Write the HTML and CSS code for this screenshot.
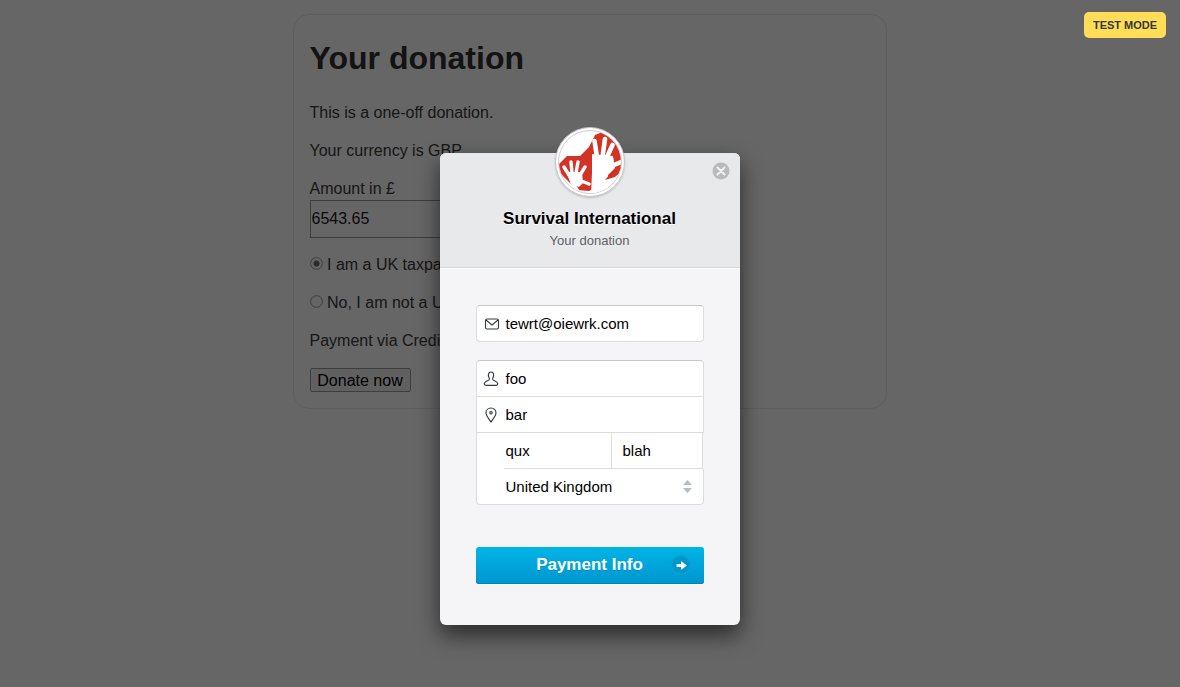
FILE: index.html
```html
<!DOCTYPE html>
<html lang="en">
<head>
<meta charset="utf-8">
<title>Your donation</title>
<link rel="stylesheet" href="styles.css">
</head>
<body>
<main class="page">
  <h1 class="title">Your donation</h1>
  <p class="line">This is a one-off donation.</p>
  <p class="line">Your currency is GBP.</p>
  <label class="amount-label">Amount in £</label>
  <input class="amount" type="text" value="6543.65">
  <p class="line radio-line"><span class="radio on"></span>I am a UK taxpayer.</p>
  <p class="line radio-line"><span class="radio"></span>No, I am not a UK taxpayer.</p>
  <p class="line">Payment via Credit Card.</p>
  <button class="donate">Donate now</button>
</main>

<div class="overlay">
  <section class="modal">
    <div class="logo">
      <svg width="70" height="70" viewBox="0 0 70 70">
        <circle cx="35" cy="35" r="34.5" fill="#fff" stroke="#c4c4c4" stroke-width="1"/>
        <circle cx="35" cy="35" r="31.5" fill="#fff" stroke="#cfcfcf" stroke-width="1"/>
        <clipPath id="inner"><circle cx="35" cy="35" r="31"/></clipPath>
        <g clip-path="url(#inner)">
          <path class="red" d="M3 38 L12 29 L25 29 L34 20 L40 8 L52 3 L64 12 L70 32 L69 40 L56 50 L50 53 L42 60 L34 64 L22 63 L6 47 Z"/>
          <path class="white" d="M37 27 L58 29 L60 41 L53 48 L53 68 L36 68 L37 45 Z"/>
          <path class="big" d="M42 30 L39.5 14 M47.5 30 L50 12 M52 30 L57.5 18 M54 40 L66 35"/>
          <path class="red" d="M50 53 L56 46 L68 39 L69 42 L60 50 Z"/>
          <path class="white" d="M11 45 L27 45 L28 56 L24 60 L16 57 Z"/>
          <path class="small" d="M14 48 L9 40 M17 46 L16 35 M21 46 L23 35 M25 48 L30 40 M24 53 L34 57 M17 55 L24 66"/>
        </g>
      </svg>
    </div>
    <button class="close" aria-label="Close">
      <svg width="18" height="18" viewBox="0 0 18 18">
        <circle cx="9" cy="9" r="8.5" fill="#b9babc"/>
        <path d="M5.5 5.5 L12.5 12.5 M12.5 5.5 L5.5 12.5" stroke="#f2f2f2" stroke-width="2" stroke-linecap="round"/>
      </svg>
    </button>
    <header class="modal-head">
      <h2 class="org">Survival International</h2>
      <p class="sub">Your donation</p>
    </header>
    <div class="modal-body">
      <div class="group email-group">
        <div class="row">
          <svg class="icon" width="16" height="16" viewBox="0 0 16 16" fill="none" stroke="#33393f" stroke-width="1.1">
            <rect x="1.5" y="3" width="13" height="10" rx="1.5"/>
            <path d="M2 4 L8 9 L14 4"/>
          </svg>
          <span class="val">tewrt@oiewrk.com</span>
        </div>
      </div>
      <div class="group address">
        <div class="row line-b">
          <svg class="icon icon-person" width="16" height="16" viewBox="0 0 16 16" fill="none" stroke="#33393f" stroke-width="1.1">
            <path d="M8 1 C6 1 5.2 2.8 5.4 4.6 C5.6 6.2 6.4 7 6.4 8.2 C6.4 9.8 1.2 10 1.2 12.8 C1.2 14 2 14.4 3 14.4 L13 14.4 C14 14.4 14.8 14 14.8 12.8 C14.8 10 9.6 9.8 9.6 8.2 C9.6 7 10.4 6.2 10.6 4.6 C10.8 2.8 10 1 8 1 Z"/>
          </svg>
          <span class="val">foo</span>
        </div>
        <div class="row line-b">
          <svg class="icon icon-pin" width="16" height="16" viewBox="0 0 16 16" fill="none" stroke="#33393f" stroke-width="1.1">
            <path d="M8 15 C6 12 3 9 3 5.8 C3 3 5.2 1 8 1 C10.8 1 13 3 13 5.8 C13 9 10 12 8 15 Z"/>
            <circle cx="8" cy="5.8" r="1.2"/>
          </svg>
          <span class="val">bar</span>
        </div>
        <div class="split">
          <span class="val city">qux</span>
          <span class="val post">blah</span>
        </div>
        <div class="row country">
          <span class="val">United Kingdom</span>
          <svg class="arrows" width="9" height="13" viewBox="0 0 9 13">
            <path d="M4.5 0 L9 5 H0 Z M0 8 H9 L4.5 13 Z" fill="#b4bec4"/>
          </svg>
        </div>
      </div>
      <button class="pay">
        <span>Payment Info</span>
        <span class="pay-icon">
          <svg width="11" height="11" viewBox="0 0 10 10"><path d="M0.5 3.6 H4.6 V1 L9.8 5 L4.6 9 V6.4 H0.5 Z" fill="#fff"/></svg>
        </span>
      </button>
    </div>
  </section>
</div>
<div class="badge">TEST MODE</div>
</body>
</html>
```

FILE: styles.css
```css
* { box-sizing: border-box; }

html, body { margin: 0; height: 687px; overflow: hidden; }

body {
  position: relative;
  background: #fff;
  color: #3a3a3a;
  font-family: "Liberation Sans", Arial, sans-serif;
  font-size: 16px;
}

.page {
  width: 594px;
  height: 395px;
  margin: 14px auto 0;
  padding: 0 16px 0 15.5px;
  border: 1px solid #e8e8e8;
  border-radius: 16px;
  overflow: hidden;
}

.title {
  margin: 25px 0 27px;
  color: #303030;
  font-size: 32px;
  line-height: 37px;
  font-weight: 700;
}

.line { margin: 0 0 20px; line-height: 18px; }

.amount-label { display: block; line-height: 18px; margin-bottom: 2px; }

.amount {
  display: block;
  width: 200px;
  height: 38px;
  margin-bottom: 18px;
  padding: 0 1px;
  border: 1px solid #9a9a9a;
  background: #fff;
  color: #222;
  font: 16px "Liberation Sans", Arial, sans-serif;
}

.radio-line { display: flex; align-items: center; }

.radio {
  width: 13px;
  height: 13px;
  margin-right: 4.5px;
  margin-top: -4px;
  border: 1px solid #a8a8a8;
  border-radius: 50%;
  background: #fff;
  box-shadow: inset 0 0 1px #999;
}

.radio.on { background: radial-gradient(circle, #6e6e6e 0 2.6px, #fff 3.6px); }

.donate {
  display: block;
  width: 101px;
  height: 24px;
  margin-top: -2px;
  padding: 1px 0 0;
  border: 1px solid #9a9a9a;
  border-radius: 2px;
  background: #efefef;
  color: #000;
  font: 16px "Liberation Sans", Arial, sans-serif;
}

.overlay {
  position: absolute;
  inset: 0;
  display: flex;
  justify-content: center;
  align-items: flex-start;
  padding-top: 153px;
  background: rgba(0,0,0,.6);
}

.modal {
  position: relative;
  width: 300px;
  height: 472px;
  border-radius: 6px;
  background: #f5f5f7;
  box-shadow: 0 10px 22px rgba(0,0,0,.6);
}

.logo {
  position: absolute;
  top: -26px;
  left: 115px;
  width: 70px;
  height: 70px;
  border-radius: 50%;
  box-shadow: 0 1px 2px rgba(0,0,0,.2);
}

.logo svg { display: block; }

.red { fill: #d13324; }
.white { fill: #fff; }
.big { fill: none; stroke: #fff; stroke-width: 4.6; stroke-linecap: round; }
.small { fill: none; stroke: #fff; stroke-width: 3.4; stroke-linecap: round; }

.close {
  position: absolute;
  top: 9px;
  right: 10px;
  width: 18px;
  height: 18px;
  padding: 0;
  border: 0;
  background: none;
}

.close svg { display: block; }

.modal-head {
  height: 115px;
  padding: 55px 1px 0 0;
  border-bottom: 1px solid #d9dadc;
  border-radius: 6px 6px 0 0;
  background: #e8e9eb;
  box-shadow: 0 1px 0 #fff;
  text-align: center;
}

.org {
  margin: 0;
  color: #000;
  font-size: 17px;
  line-height: 22px;
  font-weight: 700;
  text-shadow: 0 1px 0 #fff;
}

.sub {
  margin: 3px 0 0;
  color: #5f6266;
  font-size: 13px;
  line-height: 16px;
}

.modal-body { padding: 37px 36px 0; }

.group {
  border: 1px solid #dcdcdc;
  border-top-color: #c8c8c8;
  border-radius: 4px;
  background: #fff;
}

.email-group { height: 37px; margin-bottom: 18px; }

.address { height: 145px; margin-bottom: 42px; }

.row {
  position: relative;
  display: flex;
  align-items: center;
  height: 36px;
  padding-left: 28.5px;
  color: #000;
  font-size: 15px;
}

.email-group .row { height: 35px; }

.line-b { border-bottom: 1px solid #dcdcdc; }

.icon { position: absolute; left: 7px; top: 10px; }

.icon-person { left: 6px; }

.icon-pin { left: 5.5px; }

.val { font-size: 15px; line-height: 18px; color: #000; }

.split {
  display: flex;
  height: 36px;
  margin-left: 27px;
  border-bottom: 1px solid #dcdcdc;
  border-right: 1px solid #dcdcdc;
  box-shadow: 1px 0 0 #f5f5f7;
}

.city {
  display: flex;
  align-items: center;
  width: 108px;
  padding-left: 1.5px;
  border-right: 1px solid #dcdcdc;
}

.post {
  display: flex;
  align-items: center;
  padding-left: 10.5px;
}

.arrows {
  position: absolute;
  right: 11px;
  top: 11px;
}

.pay {
  position: relative;
  display: block;
  width: 228px;
  height: 37px;
  padding: 0 1px 1px 0;
  border: 0;
  border-radius: 3px;
  background: linear-gradient(#00b5e6, #0095cf);
  box-shadow: inset 0 -1px 0 #0082b8;
  color: #fff;
  font: 700 17px "Liberation Sans", Arial, sans-serif;
  text-align: center;
  text-shadow: 0 1px 0 rgba(0,0,0,.1);
}

.pay-icon {
  position: absolute;
  top: 8px;
  right: 13px;
  display: flex;
  align-items: center;
  justify-content: center;
  width: 20px;
  height: 20px;
  border-radius: 50%;
  background: #0097cd;
  box-shadow: inset 0 0 0 1px #0aa6d8;
}

.badge {
  position: absolute;
  top: 12px;
  right: 14px;
  width: 82px;
  height: 26px;
  border-radius: 5px;
  background: #ffdd57;
  color: #363636;
  font-size: 11px;
  font-weight: 700;
  line-height: 27px;
  text-align: center;
}
```
